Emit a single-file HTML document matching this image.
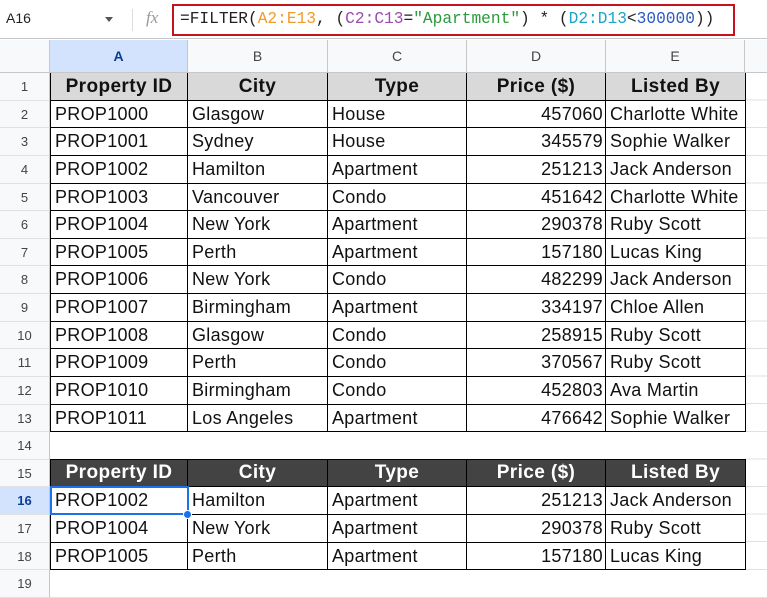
<!DOCTYPE html><html><head><style>
*{box-sizing:border-box;margin:0;padding:0}
body{width:767px;height:589px;overflow:hidden;background:#fff;font-family:"Liberation Sans",Arial,sans-serif;position:relative}
.fb{position:absolute;left:0;top:0;width:767px;height:39px;border-bottom:1px solid #c7c7c7;background:#fff}
.nm{position:absolute;left:6px;top:10px;font-size:14px;color:#222}
.dd{position:absolute;left:105px;top:17px;width:0;height:0;border-left:4px solid transparent;border-right:4px solid transparent;border-top:5px solid #555}
.sep{position:absolute;left:132px;top:9px;width:1px;height:22px;background:#ddd}
.fx{position:absolute;left:146px;top:8px;font-family:"Liberation Serif",serif;font-style:italic;font-size:17px;color:#999}
.fbox{position:absolute;left:172px;top:4px;width:563px;height:32px;border:2px solid #c5121e;font-family:"Liberation Mono",monospace;font-size:16.2px;padding:4px 0 0 6px;color:#222;white-space:nowrap}
.o{color:#f09c2a}.p{color:#9c4bb0}.g{color:#2a9a3a}.c{color:#1aa5c9}.b{color:#2b59c3}
.colh{position:absolute;top:40px;height:33px;border-right:1px solid #c7c7c7;border-bottom:1px solid #c7c7c7;background:#f8f9fa;font-size:14px;color:#444;text-align:center;line-height:32px}
.rh{position:absolute;left:0;width:50px;border-right:1px solid #c7c7c7;border-bottom:1px solid #e1e1e1;background:#f8f9fa;font-size:13px;color:#444;text-align:center}
.row{position:absolute;left:50px;width:696px;display:flex}
.row div{height:100%;border-right:1px solid #000;border-bottom:1px solid #000;font-size:18px;letter-spacing:0.3px;color:#111;padding-left:4px;white-space:nowrap;overflow:hidden;display:flex;align-items:center}
.row div:nth-child(1){width:138px;border-left:1px solid #000}
.row div:nth-child(2){width:140px}.row div:nth-child(3){width:139px}
.row div:nth-child(4){width:139px;justify-content:flex-end;padding-right:2px}
.row div:nth-child(5){width:140px}
.hd div{font-weight:bold;justify-content:center!important;padding:0!important;background:#d9d9d9;font-size:19px;letter-spacing:0.4px}
.dk div{background:#434343;color:#fff;border-color:#000}
.grid{position:absolute;left:50px;right:0;border-bottom:1px solid #e1e1e1}
</style></head><body>
<div class="fb"><span class="nm">A16</span><span class="dd"></span><span class="sep"></span><span class="fx">fx</span>
<div class="fbox">=FILTER(<span class="o">A2:E13</span>, (<span class="p">C2:C13</span>=<span class="g">"Apartment"</span>) * (<span class="c">D2:D13</span>&lt;<span class="b">300000</span>))</div></div>
<div class="colh" style="left:0;width:50px"></div>
<div class="colh" style="left:50px;width:138px;background:#d3e3fd;font-weight:bold;color:#0b3d91">A</div>
<div class="colh" style="left:188px;width:140px">B</div>
<div class="colh" style="left:328px;width:139px">C</div>
<div class="colh" style="left:467px;width:139px">D</div>
<div class="colh" style="left:606px;width:139px">E</div>
<div class="colh" style="left:745px;width:22px;border-right:none"></div>

<div class="rh" style="top:73px;height:28px;line-height:27px">1</div>
<div class="rh" style="top:101px;height:27px;line-height:27px">2</div>
<div class="rh" style="top:128px;height:28px;line-height:27px">3</div>
<div class="rh" style="top:156px;height:28px;line-height:27px">4</div>
<div class="rh" style="top:184px;height:27px;line-height:27px">5</div>
<div class="rh" style="top:211px;height:28px;line-height:27px">6</div>
<div class="rh" style="top:239px;height:27px;line-height:27px">7</div>
<div class="rh" style="top:266px;height:28px;line-height:27px">8</div>
<div class="rh" style="top:294px;height:28px;line-height:27px">9</div>
<div class="rh" style="top:322px;height:27px;line-height:27px">10</div>
<div class="rh" style="top:349px;height:28px;line-height:27px">11</div>
<div class="rh" style="top:377px;height:28px;line-height:27px">12</div>
<div class="rh" style="top:405px;height:27px;line-height:27px">13</div>
<div class="rh" style="top:432px;height:28px;line-height:27px">14</div>
<div class="rh" style="top:460px;height:27px;line-height:27px">15</div>
<div class="rh" style="top:487px;height:28px;line-height:27px;background:#d3e3fd;font-weight:bold;color:#0b3d91">16</div>
<div class="rh" style="top:515px;height:28px;line-height:27px">17</div>
<div class="rh" style="top:543px;height:27px;line-height:27px">18</div>
<div class="rh" style="top:570px;height:28px;line-height:27px">19</div>

<div class="grid" style="top:432px;height:28px"></div>
<div class="grid" style="top:570px;height:28px"></div>
<div style="position:absolute;left:745px;top:73px;width:22px;height:516px;background:repeating-linear-gradient(#fff 0 26.6px,#e1e1e1 26.6px 27.6px)"></div>

<div class="row hd" style="top:73px;height:28px"><div>Property ID</div><div>City</div><div>Type</div><div>Price ($)</div><div>Listed By</div></div>
<div class="row" style="top:101px;height:27px"><div>PROP1000</div><div>Glasgow</div><div>House</div><div>457060</div><div>Charlotte White</div></div>
<div class="row" style="top:128px;height:28px"><div>PROP1001</div><div>Sydney</div><div>House</div><div>345579</div><div>Sophie Walker</div></div>
<div class="row" style="top:156px;height:28px"><div>PROP1002</div><div>Hamilton</div><div>Apartment</div><div>251213</div><div>Jack Anderson</div></div>
<div class="row" style="top:184px;height:27px"><div>PROP1003</div><div>Vancouver</div><div>Condo</div><div>451642</div><div>Charlotte White</div></div>
<div class="row" style="top:211px;height:28px"><div>PROP1004</div><div>New York</div><div>Apartment</div><div>290378</div><div>Ruby Scott</div></div>
<div class="row" style="top:239px;height:27px"><div>PROP1005</div><div>Perth</div><div>Apartment</div><div>157180</div><div>Lucas King</div></div>
<div class="row" style="top:266px;height:28px"><div>PROP1006</div><div>New York</div><div>Condo</div><div>482299</div><div>Jack Anderson</div></div>
<div class="row" style="top:294px;height:28px"><div>PROP1007</div><div>Birmingham</div><div>Apartment</div><div>334197</div><div>Chloe Allen</div></div>
<div class="row" style="top:322px;height:27px"><div>PROP1008</div><div>Glasgow</div><div>Condo</div><div>258915</div><div>Ruby Scott</div></div>
<div class="row" style="top:349px;height:28px"><div>PROP1009</div><div>Perth</div><div>Condo</div><div>370567</div><div>Ruby Scott</div></div>
<div class="row" style="top:377px;height:28px"><div>PROP1010</div><div>Birmingham</div><div>Condo</div><div>452803</div><div>Ava Martin</div></div>
<div class="row" style="top:405px;height:27px"><div>PROP1011</div><div>Los Angeles</div><div>Apartment</div><div>476642</div><div>Sophie Walker</div></div>

<div class="row hd dk" style="top:459px;height:28px;border-top:1px solid #000"><div>Property ID</div><div>City</div><div>Type</div><div>Price ($)</div><div>Listed By</div></div>
<div class="row" style="top:487px;height:28px"><div>PROP1002</div><div>Hamilton</div><div>Apartment</div><div>251213</div><div>Jack Anderson</div></div>
<div class="row" style="top:515px;height:28px"><div>PROP1004</div><div>New York</div><div>Apartment</div><div>290378</div><div>Ruby Scott</div></div>
<div class="row" style="top:543px;height:27px"><div>PROP1005</div><div>Perth</div><div>Apartment</div><div>157180</div><div>Lucas King</div></div>

<div style="position:absolute;left:50px;top:486px;width:139px;height:29px;border:2px solid #1a73e8"></div>
<div style="position:absolute;left:183px;top:510px;width:9px;height:9px;border-radius:50%;background:#1a73e8;border:1px solid #fff"></div>
</body></html>
